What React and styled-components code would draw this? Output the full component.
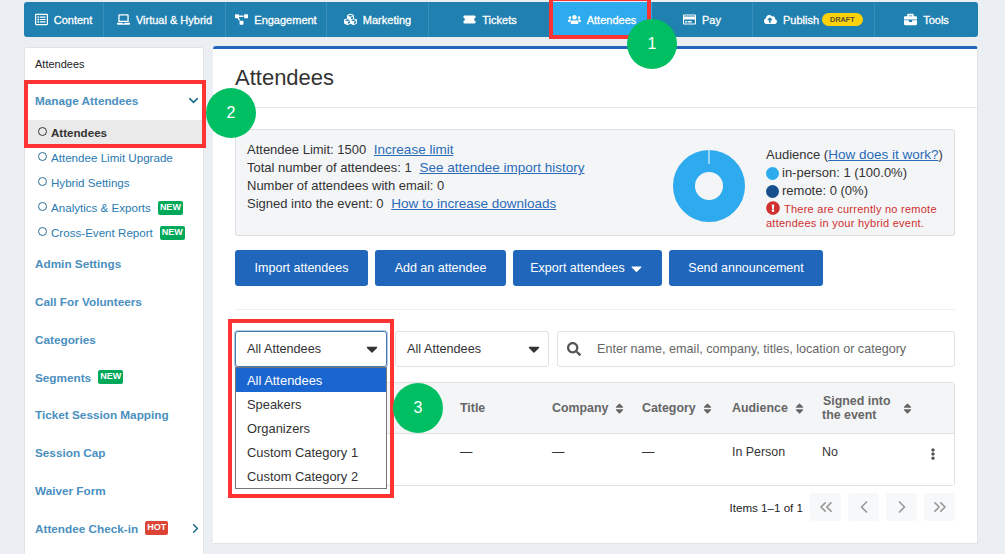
import React from 'react';
import styled, { createGlobalStyle } from 'styled-components';
import {
  FaRegListAlt, FaLaptop, FaProjectDiagram, FaCubes, FaUsers,
  FaRegCreditCard, FaCloudUploadAlt, FaBriefcase, FaSearch, FaExclamationCircle,
  FaCaretDown, FaSort, FaEllipsisV,
} from 'react-icons/fa';
import { FiChevronDown, FiChevronLeft, FiChevronRight, FiChevronsLeft, FiChevronsRight } from 'react-icons/fi';

const GlobalStyle = createGlobalStyle`
  html, body {
    margin: 0;
    height: 554px;
    overflow: hidden;
    background: #ebeef3;
    font-family: "Liberation Sans", Arial, sans-serif;
    color: #333;
  }
  * { box-sizing: border-box; }
`;

const Page = styled.div`
  position: relative;
  height: 554px;
  padding: 2px 27px 0 24px;
  overflow: hidden;
`;

const TopNav = styled.nav`
  display: grid;
  grid-template-columns: 80px 122px 101px 102px 123px 100px 101px 122px 1fr;
  height: 35px;
  background: #2080b0;
  border-radius: 3px;
  overflow: hidden;
`;

const NavTab = styled.div`
  display: flex;
  align-items: center;
  justify-content: center;
  gap: 6px;
  font-size: 11px;
  font-weight: 400;
  -webkit-text-stroke: 0.3px #fff;
  color: #fff;
  background: ${p => (p.$active ? '#2eaaef' : 'transparent')};
  border-right: ${p => (p.$last || p.$active ? 'none' : '1px solid #3a8fba')};
  svg { font-size: 13px; }
`;

const DraftBadge = styled.span`
  margin-left: -3px;
  padding: 0 8px;
  height: 13px;
  line-height: 14px;
  border-radius: 7px;
  background: #fdd20a;
  color: #333;
  -webkit-text-stroke: 0.2px #333;
  font-size: 7px;
  letter-spacing: 0.3px;
`;

const Columns = styled.div`
  display: grid;
  grid-template-columns: 180px 1fr;
  column-gap: 9px;
  margin-top: 9px;
  align-items: start;
`;

const Sidebar = styled.aside`
  height: 560px;
  margin-top: 1px;
  background: #fff;
  border: 1px solid #dfe2e6;
  border-radius: 3px 3px 0 0;
`;

const SideTitle = styled.div`
  height: 33px;
  padding: 0 0 2px 10px;
  display: flex;
  align-items: center;
  font-size: 11px;
  color: #222;
`;

const GroupHead = styled.div`
  height: 40px;
  padding: 0 2px 2px 10px;
  display: flex;
  align-items: center;
  justify-content: space-between;
  font-size: 11.75px;
  font-weight: 700;
  color: #4a8fc0;
  svg { color: #1e6a8e; font-size: 15px; stroke-width: 2.5; }
`;

const SubItem = styled.div`
  height: 25px;
  margin-top: ${p => (p.$first ? '-1px' : '0')};
  padding-left: 13px;
  display: flex;
  align-items: center;
  gap: 4px;
  font-size: 11.6px;
  font-weight: ${p => (p.$active ? 700 : 400)};
  color: ${p => (p.$active ? '#333' : '#2a7ab0')};
  background: ${p => (p.$active ? '#eaeaea' : 'transparent')};
`;

const Bullet = styled.span`
  width: 9px;
  height: 9px;
  margin-top: -2px;
  border-radius: 50%;
  border: 1px solid ${p => (p.$active ? '#333' : '#2a6f95')};
`;

const Tag = styled.span`
  margin-left: 3px;
  padding: 0 2px;
  height: 14px;
  line-height: 13px;
  border-radius: 2px;
  font-size: 9px;
  font-weight: 700;
  color: #fff;
  background: ${p => (p.$hot ? '#dc4535' : '#00a859')};
`;

const SideLink = styled.div`
  height: 37.75px;
  padding: 0 0 0 10px;
  display: flex;
  align-items: center;
  gap: 4px;
  font-size: 11.75px;
  font-weight: 700;
  color: #4a8fc0;
  > svg { margin-left: auto; color: #1e6a8e; font-size: 15px; stroke-width: 2.5; }
`;

const Main = styled.main`
  height: 498px;
  background: #fff;
  border-top: 3px solid #2067bc;
  border-right: 1px solid #dfe2e6;
  border-bottom: 1px solid #dfe2e6;
  border-radius: 3px 3px 0 0;
`;

const Heading = styled.h1`
  margin: 0;
  height: 59px;
  padding: 0 22px;
  display: flex;
  align-items: center;
  font-size: 22px;
  font-weight: 400;
  color: #333;
  border-bottom: 1px solid #e8e9ec;
`;

const Body = styled.div`
  padding: 21px 22px 0;
`;

const StatsBox = styled.section`
  height: 107px;
  padding: 11px 10px 0 11px;
  display: flex;
  background: #f4f5f7;
  border: 1px solid #dcdee1;
  border-radius: 3px;
  font-size: 13px;
  line-height: 18px;
`;

const StatLine = styled.div`
  a { margin-left: 4px; }
`;

const Link = styled.a`
  font-size: 13.5px;
  color: #2a6bb8;
  text-decoration: underline;
`;

const Donut = styled.svg`
  margin: 9px 21px 0 auto;
  flex: none;
`;

const Legend = styled.div`
  width: 178px;
  margin-top: 5px;
`;

const LegendRow = styled.div`
  display: flex;
  align-items: center;
  gap: 3px;
`;

const Dot = styled.span`
  width: 13px;
  height: 13px;
  border-radius: 50%;
  background: ${p => p.$color};
`;

const Warning = styled.div`
  margin-top: 1px;
  font-size: 11px;
  line-height: 14px;
  letter-spacing: 0.25px;
  color: #d0302f;
  svg { font-size: 14px; vertical-align: -2px; margin-right: 4px; }
`;

const Actions = styled.div`
  display: flex;
  gap: 7px;
  margin-top: 14px;
  padding-bottom: 23px;
  border-bottom: 1px solid #eeeff1;
`;

const Button = styled.button`
  height: 36px;
  width: ${p => p.$w}px;
  border: none;
  border-radius: 3px;
  background: #2067bc;
  color: #fff;
  font-family: inherit;
  font-size: 12.5px;
  display: flex;
  align-items: center;
  justify-content: center;
  gap: 3px;
  svg { font-size: 17px; }
`;

const Filters = styled.div`
  position: relative;
  display: grid;
  grid-template-columns: 152px 154px 1fr;
  gap: 8px;
  margin-top: 21px;
`;

const Select = styled.div`
  height: 36px;
  padding: 0 5px 0 11px;
  display: flex;
  align-items: center;
  justify-content: space-between;
  font-size: 12.7px;
  color: #333;
  background: #fff;
  border: 1px solid ${p => (p.$open ? '#4a7bb0' : '#dfe1e4')};
  border-radius: 3px;
  box-shadow: ${p => (p.$open ? '0 0 0 1px #b4cbe6' : 'none')};
  svg { font-size: 18px; }
`;

const Search = styled.div`
  height: 36px;
  padding: 0 9px;
  display: flex;
  align-items: center;
  gap: 16px;
  font-size: 12.6px;
  color: #666;
  border: 1px solid #dfe1e4;
  border-radius: 3px;
  svg { font-size: 14px; color: #555; }
`;

const Menu = styled.ul`
  position: absolute;
  top: 36px;
  left: 0;
  z-index: 2;
  width: 152px;
  margin: 0;
  padding: 0;
  list-style: none;
  height: 122px;
  background: #fff;
  border: 1px solid #767676;
`;

const MenuItem = styled.li`
  height: 24px;
  padding-left: 11px;
  display: flex;
  align-items: center;
  font-size: 12.9px;
  color: ${p => (p.$selected ? '#fff' : '#333')};
  background: ${p => (p.$selected ? '#1a66d0' : 'transparent')};
`;

const Table = styled.div`
  margin-top: 15px;
  height: 104px;
  border: 1px solid #dfe1e4;
  border-radius: 3px;
`;

const TableRow = styled.div`
  display: grid;
  grid-template-columns: 224px 92px 90px 90px 90px 1fr 30px;
  height: 51px;
  align-items: ${p => (p.$head ? 'center' : 'start')};
  padding-top: ${p => (p.$head ? '0' : '11px')};
  background: ${p => (p.$head ? '#f4f5f7' : '#fff')};
  border-bottom: ${p => (p.$head ? '1px solid #dfe1e4' : 'none')};
  font-size: 12.4px;
  color: #333;
`;

const HeadCell = styled.div`
  display: flex;
  align-items: center;
  gap: ${p => p.$gap || 5}px;
  grid-column: ${p => (p.$wide ? 'span 2' : 'auto')};
  font-weight: 700;
  color: #666;
  line-height: 14px;
  svg { font-size: 13px; color: #666; }
`;

const SignedLabel = styled.div`
  text-indent: 1px;
`;

const Kebab = styled.div`
  padding: 3px 0 0 3px;
  color: #555;
  svg { font-size: 12px; }
`;

const Pager = styled.div`
  display: flex;
  align-items: center;
  justify-content: flex-end;
  gap: 7px;
  margin-top: 7px;
  font-size: 11.6px;
`;

const PagerText = styled.span`
  color: #222;
`;

const PageButton = styled.div`
  width: 31px;
  height: 28px;
  display: flex;
  align-items: center;
  justify-content: center;
  background: #f7f8f9;
  border-radius: 3px;
  color: #999;
  font-size: 20px;
`;

const Callout = styled.div`
  position: absolute;
  left: ${p => p.$x}px;
  top: ${p => p.$y}px;
  width: ${p => p.$w}px;
  height: ${p => p.$h}px;
  border: 4px solid #fe3334;
  z-index: 3;
`;

const Marker = styled.div`
  position: absolute;
  left: ${p => p.$x - 25}px;
  top: ${p => p.$y - 25}px;
  width: 50px;
  height: 50px;
  border-radius: 50%;
  background: #00bf63;
  color: #fff;
  font-size: 16px;
  display: flex;
  align-items: center;
  justify-content: center;
  z-index: 4;
`;

// solid ticket, the package one has a hole in the middle
const TicketIcon = () => (
  <svg width="13" height="13" viewBox="0 0 13 13" fill="currentColor">
    <path d="M1.5 2.5h10a1 1 0 0 1 1 1v1.6a1.4 1.4 0 0 0 0 2.8v1.6a1 1 0 0 1-1 1h-10a1 1 0 0 1-1-1V7.9a1.4 1.4 0 0 0 0-2.8V3.5a1 1 0 0 1 1-1z" />
  </svg>
);

const tabs = [
  { label: 'Content', Icon: FaRegListAlt },
  { label: 'Virtual & Hybrid', Icon: FaLaptop },
  { label: 'Engagement', Icon: FaProjectDiagram },
  { label: 'Marketing', Icon: FaCubes },
  { label: 'Tickets', Icon: TicketIcon },
  { label: 'Attendees', Icon: FaUsers, active: true },
  { label: 'Pay', Icon: FaRegCreditCard },
  { label: 'Publish', Icon: FaCloudUploadAlt, draft: true },
  { label: 'Tools', Icon: FaBriefcase, last: true },
];

const subItems = [
  { label: 'Attendees', active: true },
  { label: 'Attendee Limit Upgrade' },
  { label: 'Hybrid Settings' },
  { label: 'Analytics & Exports', tag: 'NEW' },
  { label: 'Cross-Event Report', tag: 'NEW' },
];

const sideLinks = [
  { label: 'Admin Settings' },
  { label: 'Call For Volunteers' },
  { label: 'Categories' },
  { label: 'Segments', tag: 'NEW' },
  { label: 'Ticket Session Mapping' },
  { label: 'Session Cap' },
  { label: 'Waiver Form' },
  { label: 'Attendee Check-in', tag: 'HOT', arrow: true },
];

const menuItems = ['All Attendees', 'Speakers', 'Organizers', 'Custom Category 1', 'Custom Category 2'];

const App = () => (
  <Page>
    <GlobalStyle />
    <TopNav>
      {tabs.map(({ label, Icon, active, draft, last }) => (
        <NavTab key={label} $active={active} $last={last}>
          <Icon />
          {label}
          {draft && <DraftBadge>DRAFT</DraftBadge>}
        </NavTab>
      ))}
    </TopNav>

    <Columns>
      <Sidebar>
        <SideTitle>Attendees</SideTitle>
        <GroupHead>Manage Attendees <FiChevronDown /></GroupHead>
        {subItems.map((item, i) => (
          <SubItem key={item.label} $active={item.active} $first={i === 0}>
            <Bullet $active={item.active} />
            {item.label}
            {item.tag && <Tag>{item.tag}</Tag>}
          </SubItem>
        ))}
        {sideLinks.map(item => (
          <SideLink key={item.label}>
            {item.label}
            {item.tag && <Tag $hot={item.tag === 'HOT'}>{item.tag}</Tag>}
            {item.arrow && <FiChevronRight />}
          </SideLink>
        ))}
      </Sidebar>

      <Main>
        <Heading>Attendees</Heading>
        <Body>
          <StatsBox>
            <div>
              <StatLine>Attendee Limit: 1500 <Link>Increase limit</Link></StatLine>
              <StatLine>Total number of attendees: 1 <Link>See attendee import history</Link></StatLine>
              <StatLine>Number of attendees with email: 0</StatLine>
              <StatLine>Signed into the event: 0 <Link>How to increase downloads</Link></StatLine>
            </div>
            <Donut width="72" height="72" viewBox="0 0 72 72">
              <circle cx="36" cy="36" r="25" fill="none" stroke="#2eaaef" strokeWidth="22" />
              <line x1="36" y1="0" x2="36" y2="14" stroke="#fff" strokeWidth="1" />
            </Donut>
            <Legend>
              <div>Audience (<Link>How does it work?</Link>)</div>
              <LegendRow><Dot $color="#2eaaef" />in-person: 1 (100.0%)</LegendRow>
              <LegendRow><Dot $color="#174f8c" />remote: 0 (0%)</LegendRow>
              <Warning><FaExclamationCircle />There are currently no remote attendees in your hybrid event.</Warning>
            </Legend>
          </StatsBox>

          <Actions>
            <Button $w={133}>Import attendees</Button>
            <Button $w={131}>Add an attendee</Button>
            <Button $w={149}>Export attendees <FaCaretDown /></Button>
            <Button $w={154}>Send announcement</Button>
          </Actions>

          <Filters>
            <Select $open>All Attendees <FaCaretDown /></Select>
            <Select>All Attendees <FaCaretDown /></Select>
            <Search><FaSearch />Enter name, email, company, titles, location or category</Search>
            <Menu>
              {menuItems.map((item, i) => (
                <MenuItem key={item} $selected={i === 0}>{item}</MenuItem>
              ))}
            </Menu>
          </Filters>

          <Table>
            <TableRow $head>
              <div />
              <HeadCell>Title</HeadCell>
              <HeadCell>Company <FaSort /></HeadCell>
              <HeadCell>Category <FaSort /></HeadCell>
              <HeadCell>Audience <FaSort /></HeadCell>
              <HeadCell $wide $gap={11}><SignedLabel>Signed into<br />the event</SignedLabel> <FaSort /></HeadCell>
            </TableRow>
            <TableRow>
              <div />
              <div>—</div>
              <div>—</div>
              <div>—</div>
              <div>In Person</div>
              <div>No</div>
              <Kebab><FaEllipsisV /></Kebab>
            </TableRow>
          </Table>

          <Pager>
            <PagerText>Items 1–1 of 1</PagerText>
            <PageButton><FiChevronsLeft /></PageButton>
            <PageButton><FiChevronLeft /></PageButton>
            <PageButton><FiChevronRight /></PageButton>
            <PageButton><FiChevronsRight /></PageButton>
          </Pager>
        </Body>
      </Main>
    </Columns>

    <Callout $x={549} $y={-3} $w={102} $h={42} />
    <Callout $x={24} $y={80} $w={182} $h={68} />
    <Callout $x={228} $y={319} $w={166} $h={179} />
    <Marker $x={652} $y={44}>1</Marker>
    <Marker $x={231} $y={113}>2</Marker>
    <Marker $x={418} $y={408}>3</Marker>
  </Page>
);

export default App;
